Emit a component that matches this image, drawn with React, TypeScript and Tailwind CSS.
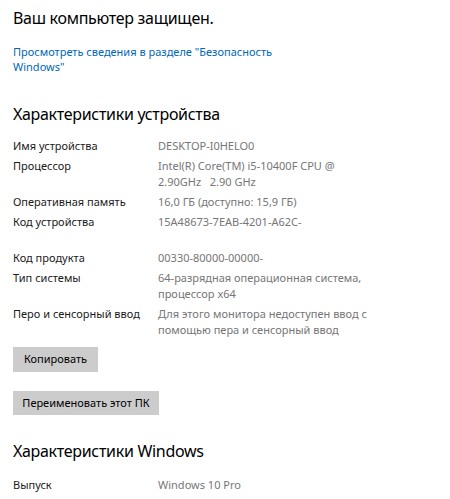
import React from "react";

const rows: { label: string; value: string[] }[] = [
  { label: "Имя устройства", value: ["DESKTOP-I0HELO0"] },
  { label: "Процессор", value: ["Intel(R) Core(TM) i5-10400F CPU @", "2.90GHz   2.90 GHz"] },
  { label: "Оперативная память", value: ["16,0 ГБ (доступно: 15,9 ГБ)"] },
  { label: "Код устройства", value: ["15A48673-7EAB-4201-A62C-", "\u00a0"] },
  { label: "Код продукта", value: ["00330-80000-00000-"] },
  { label: "Тип системы", value: ["64-разрядная операционная система,", "процессор x64"] },
  { label: "Перо и сенсорный ввод", value: ["Для этого монитора недоступен ввод с", "помощью пера и сенсорный ввод"] },
];

export default function App() {
  return (
    <div
      className="w-[450px] h-[499px] overflow-hidden bg-white pl-[13px] text-[#1a1a1a]"
      style={{ fontFamily: '"Noto Sans", "Open Sans", sans-serif' }}
    >
      <div className="pt-[8px] text-[16px] leading-[20px] tracking-[-0.3px] text-black">Ваш компьютер защищен.</div>
      <div className="mt-[16px] text-[11px] leading-[15px] text-[#0067b8]">
        Просмотреть сведения в разделе "Безопасность
        <br />
        Windows"
      </div>
      <div className="mt-[30px] text-[16px] leading-[20px] tracking-[-0.3px] text-black">Характеристики устройства</div>
      <div className="mt-[14px] grid grid-cols-[145px_1fr] gap-y-[4px] text-[11px] leading-[16px]">
        {rows.map((r) => (
          <React.Fragment key={r.label}>
            <div>{r.label}</div>
            <div className="text-[#767676] whitespace-pre">
              {r.value.map((v, i) => (
                <div key={i}>{v}</div>
              ))}
            </div>
          </React.Fragment>
        ))}
      </div>
      <div className="mt-[9px] flex flex-col items-start gap-[19px]">
        <button className="h-[25px] w-[85px] bg-[#cccccc] text-[11px] text-black">Копировать</button>
        <button className="h-[24px] w-[146px] bg-[#cccccc] text-[11px] text-black">Переименовать этот ПК</button>
      </div>
      <div className="mt-[26px] text-[16px] leading-[20px] tracking-[-0.3px] text-black">Характеристики Windows</div>
      <div className="mt-[16px] grid grid-cols-[145px_1fr] text-[11px] leading-[16px]">
        <div>Выпуск</div>
        <div className="text-[#767676]">Windows 10 Pro</div>
      </div>
    </div>
  );
}
